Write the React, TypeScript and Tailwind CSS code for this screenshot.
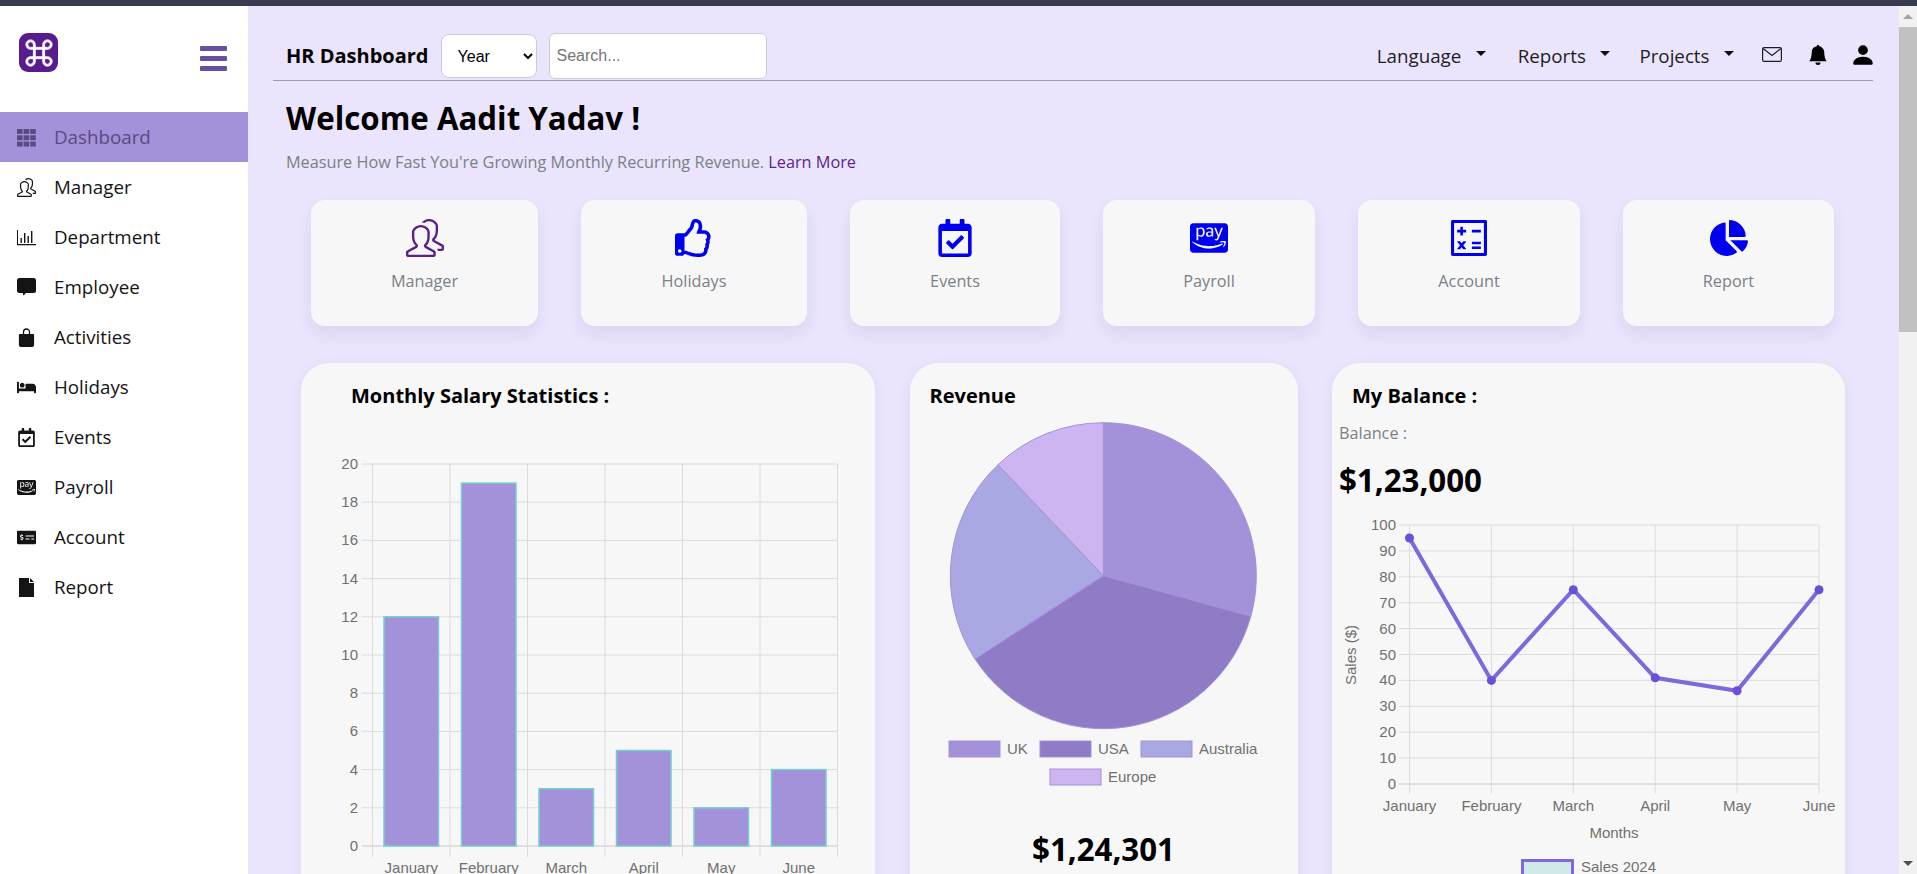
import React from 'react';
import { BsCommand, BsBellFill, BsPersonFill } from 'react-icons/bs';
import { SlPeople } from 'react-icons/sl';
import { FaBed, FaRegCalendarCheck, FaCcAmazonPay, FaMoneyCheckAlt, FaRegThumbsUp, FaChartPie } from 'react-icons/fa';
import { AiOutlineCalculator } from 'react-icons/ai';

type IconProps = { size?: number; className?: string };

const GridIcon = ({ size = 19 }: IconProps) => (
  <svg width={size} height={size} viewBox="0 0 19 19" fill="currentColor">
    {[1, 7.3, 13.6].map((y) => [0, 6.6, 13.2].map((x) => <rect key={`${x}-${y}`} x={x} y={y} width={5.6} height={4.9} />))}
  </svg>
);

const DeptIcon = ({ size = 19 }: IconProps) => (
  <svg width={size} height={size} viewBox="0 0 19 19" fill="currentColor">
    <path d="M0 2h1v14h18v1.3H0z" />
    <rect x={3.5} y={10} width={1.4} height={5} />
    <rect x={7} y={5} width={1.4} height={10} />
    <rect x={10.5} y={8} width={1.4} height={7} />
    <rect x={14} y={3} width={1.4} height={12} />
  </svg>
);

const ChatIcon = ({ size = 19 }: IconProps) => (
  <svg width={size} height={size} viewBox="0 0 19 19" fill="currentColor">
    <path d="M2.5 0h14A2.5 2.5 0 0 1 19 2.5v10a2.5 2.5 0 0 1-2.5 2.5H9l-2.5 2.6L5.6 15H2.500A2.500 2.500 0 0 1 0 12.500v-10A2.500 2.500 0 0 1 2.500 0z" />
  </svg>
);

const BagIcon = ({ size = 19 }: IconProps) => (
  <svg width={size} height={size} viewBox="0 0 19 19" fill="currentColor">
    <path d="M2.500 6h14a.6.6 0 0 1 .6.6V17a2 2 0 0 1-2 2H3.900a2 2 0 0 1-2-2V6.600a.6.6 0 0 1 .6-.6z" />
    <path d="M6.500 6V4a3 3 0 0 1 6 0v2" fill="none" stroke="currentColor" strokeWidth={1.3} />
  </svg>
);

const FileIcon = ({ size = 19 }: IconProps) => (
  <svg width={size} height={size} viewBox="0 0 19 19" fill="currentColor">
    <path d="M2 0h10v5h5v14H2zM13 0l4 4h-4z" />
  </svg>
);

const MailIcon = () => (
  <svg width={20} height={15} viewBox="0 0 20 15" fill="none" stroke="currentColor" strokeWidth={1.2} className="mb-[4px] ml-[28px]">
    <rect x={0.6} y={0.6} width={18.8} height={13.8} rx={1.5} />
    <path d="M1 1.500l9 7 9-7" />
  </svg>
);

const navItems = [
  { label: 'Dashboard', icon: GridIcon },
  { label: 'Manager', icon: SlPeople },
  { label: 'Department', icon: DeptIcon },
  { label: 'Employee', icon: ChatIcon },
  { label: 'Activities', icon: BagIcon },
  { label: 'Holidays', icon: FaBed },
  { label: 'Events', icon: FaRegCalendarCheck },
  { label: 'Payroll', icon: FaCcAmazonPay },
  { label: 'Account', icon: FaMoneyCheckAlt },
  { label: 'Report', icon: FileIcon },
];

const quickCards = [
  { label: 'Manager', icon: SlPeople, size: 38, width: 'w-[227px]', color: 'text-[#5a1e8e]' },
  { label: 'Holidays', icon: FaRegThumbsUp, size: 38, width: 'w-[226px]', color: 'text-[#0000f0]' },
  { label: 'Events', icon: FaRegCalendarCheck, size: 38, width: 'w-[210px]', color: 'text-[#0000f0]' },
  { label: 'Payroll', icon: FaCcAmazonPay, size: 38, width: 'w-[212px]', color: 'text-[#0000f0]' },
  { label: 'Account', icon: AiOutlineCalculator, size: 46, width: 'w-[222px]', color: 'text-[#0000f0]' },
  { label: 'Report', icon: FaChartPie, size: 38, width: 'w-[211px]', color: 'text-[#0000f0]' },
];

const months = ['January', 'February', 'March', 'April', 'May', 'June'];
const GRID = '#dcdcdc';
const AXIS = '#c8c8c8';
const LABEL = '#707070';

const Caret = () => (
  <span className="mb-[5px] ml-[14.5px] inline-block h-0 w-0 border-x-[5px] border-t-[5px] border-x-transparent border-t-[#111]" />
);

const BarChart = () => {
  const values = [12, 19, 3, 5, 2, 4];
  const left = 372.5;
  const step = 77.5;
  const bottom = 845;
  const unit = 19.1;
  return (
    <svg viewBox="301 440 574 440" className="mt-[32px] block h-[440px] w-[574px] font-['Liberation_Sans']">
      {Array.from({ length: 11 }).map((_, i) => {
        const y = bottom - i * 2 * unit;
        return (
          <g key={i}>
            <line x1={362} x2={837.5} y1={y} y2={y} stroke={i === 0 ? AXIS : GRID} strokeWidth={1} />
            <text x={358} y={y + 5} textAnchor="end" fontSize={15} fill={LABEL}>{i * 2}</text>
          </g>
        );
      })}
      {Array.from({ length: 7 }).map((_, i) => (
        <line key={i} x1={left + i * step} x2={left + i * step} y1={463} y2={856} stroke={GRID} strokeWidth={1} />
      ))}
      {values.map((v, i) => (
        <rect key={i} x={left + i * step + 11.5} y={bottom - v * unit} width={54.5} height={v * unit} fill="#a391d9" stroke="#74cfd0" strokeWidth={1.5} />
      ))}
      {months.map((m, i) => (
        <text key={m} x={left + (i + 0.5) * step} y={872} textAnchor="middle" fontSize={15} fill={LABEL}>{m}</text>
      ))}
    </svg>
  );
};

const slicePath = (cx: number, cy: number, r: number, from: number, to: number) => {
  const rad = (deg: number) => (deg * Math.PI) / 180;
  const x1 = cx + r * Math.sin(rad(from));
  const y1 = cy - r * Math.cos(rad(from));
  const x2 = cx + r * Math.sin(rad(to));
  const y2 = cy - r * Math.cos(rad(to));
  return `M${cx} ${cy}L${x1} ${y1}A${r} ${r} 0 ${to - from > 180 ? 1 : 0} 1 ${x2} ${y2}Z`;
};

const PieChart = () => {
  const slices = [
    { label: 'UK', from: 0, to: 105.4, color: '#a391d9', box: 949, y: 740 },
    { label: 'USA', from: 105.4, to: 237, color: '#8f7bc6', box: 1040, y: 740 },
    { label: 'Australia', from: 237, to: 316.5, color: '#a9a8e2', box: 1141, y: 740 },
    { label: 'Europe', from: 316.5, to: 360, color: '#ccb5f0', box: 1050, y: 768 },
  ];
  return (
    <svg viewBox="910 415 388 380" className="block h-[380px] w-[388px] font-['Liberation_Sans']">
      {slices.map((s) => (
        <path key={s.label} d={slicePath(1103.3, 574.7, 153, s.from, s.to)} fill={s.color} stroke="#a391d9" strokeWidth={1} />
      ))}
      {slices.map((s) => (
        <g key={s.label}>
          <rect x={s.box} y={s.y} width={51} height={16} fill={s.color} stroke="#a391d9" strokeWidth={1} />
          <text x={s.box + 58} y={s.y + 13} fontSize={15} fill={LABEL}>{s.label}</text>
        </g>
      ))}
    </svg>
  );
};

const LineChart = () => {
  const values = [95, 40, 75, 41, 36, 75];
  const left = 1409.5;
  const step = 81.9;
  const bottom = 783;
  const unit = 2.59;
  const points = values.map((v, i) => [left + i * step, bottom - v * unit]);
  return (
    <svg viewBox="1332 510 513 370" className="mt-[12.5px] block h-[370px] w-[513px] font-['Liberation_Sans']">
      {Array.from({ length: 11 }).map((_, i) => {
        const y = bottom - i * 25.9;
        return (
          <g key={i}>
            <line x1={1399} x2={1819} y1={y} y2={y} stroke={i === 0 ? AXIS : GRID} strokeWidth={1} />
            <text x={1396} y={y + 5} textAnchor="end" fontSize={15} fill={LABEL}>{i * 10}</text>
          </g>
        );
      })}
      {months.map((m, i) => (
        <g key={m}>
          <line x1={left + i * step} x2={left + i * step} y1={524} y2={793} stroke={GRID} strokeWidth={1} />
          <text x={left + i * step} y={810} textAnchor="middle" fontSize={15} fill={LABEL}>{m}</text>
        </g>
      ))}
      <polyline points={points.map((p) => p.join(',')).join(' ')} fill="none" stroke="#7f67dc" strokeWidth={4} />
      {points.map((p, i) => (
        <circle key={i} cx={p[0]} cy={p[1]} r={4.5} fill="#6c4fd8" />
      ))}
      <text x={1614} y={837} textAnchor="middle" fontSize={15} fill={LABEL}>Months</text>
      <text transform="translate(1356 654) rotate(-90)" textAnchor="middle" fontSize={15} fill={LABEL}>Sales ($)</text>
      <rect x={1522.5} y={859.5} width={50} height={16} fill="#d0e9e9" stroke="#7f67dc" strokeWidth={3} />
      <text x={1581} y={871} fontSize={15} fill={LABEL}>Sales 2024</text>
    </svg>
  );
};

export default function App() {
  return (
    <div className="flex h-[874px] w-full flex-col overflow-hidden font-['Open_Sans',sans-serif]">
      <div className="h-[6px] shrink-0 bg-[#393a4f]" />
      <div className="flex min-h-0 flex-1">
        {/* Sidebar */}
        <aside className="w-[248px] shrink-0 bg-white">
          <div className="flex h-[106px] items-start justify-between pl-[19px] pr-[21px]">
            <div className="mt-[27px] flex h-[39px] w-[39px] items-center justify-center rounded-[9px] bg-[#581c8e] text-white">
              <BsCommand size={30} strokeWidth={0.5} />
            </div>
            <div className="mt-[40px] flex h-[25px] w-[27px] flex-col justify-between">
              <span className="h-[5px] rounded-[1px] bg-[#6750a4]" />
              <span className="h-[5px] rounded-[1px] bg-[#6750a4]" />
              <span className="h-[5px] rounded-[1px] bg-[#6750a4]" />
            </div>
          </div>
          <nav>
            {navItems.map((item, i) => {
              const Icon = item.icon;
              return (
                <div
                  key={item.label}
                  className={
                    i === 0
                      ? 'flex h-[50px] items-center bg-[#a391d9] pl-[17px] text-[18.75px] text-[#5a4a82]'
                      : 'flex h-[50px] items-center pl-[17px] text-[18.75px] text-[#141414]'
                  }
                >
                  <span className="flex w-[37px] justify-start">
                    <Icon size={19} />
                  </span>
                  {item.label}
                </div>
              );
            })}
          </nav>
        </aside>

        {/* Main */}
        <main className="min-w-0 flex-1 overflow-hidden bg-[#eae4fc]">
          <header className="ml-[25px] mr-[26px] flex h-[75px] items-center border-b border-[#a09ca6] pl-[13px] pt-[26px]">
            <span className="text-[20px] font-bold text-[#050505]">HR Dashboard</span>
            <select className="ml-[12px] h-[44px] w-[96px] rounded-lg border border-[#cfcbd6] bg-white pl-[12px] font-['Liberation_Sans'] text-[16px] text-black">
              <option>Year</option>
            </select>
            <input
              placeholder="Search..."
              className="ml-[12px] h-[46px] w-[218px] rounded-md border border-[#cfcbd6] bg-white pl-[7px] font-['Liberation_Sans'] text-[16px] placeholder:text-[#757575]"
            />
            <div className="-mr-[3px] ml-auto flex items-center text-[18.75px] text-[#1d1d26]">
              <span>Language</span>
              <Caret />
              <span className="ml-[32px]">Reports</span>
              <Caret />
              <span className="ml-[29px]">Projects</span>
              <Caret />
              <MailIcon />
              <BsBellFill size={20} className="mb-[3px] ml-[26px] text-black" />
              <BsPersonFill size={26} className="mb-[3px] ml-[22px] text-black" />
            </div>
          </header>

          <h1 className="ml-[38px] mt-[15px] text-[31.25px] font-bold leading-[44px] text-black">Welcome Aadit Yadav !</h1>
          <p className="ml-[38px] mt-[11px] text-[16.25px] leading-[22px] text-[#7a8088]">
            Measure How Fast You're Growing Monthly Recurring Revenue. <span className="text-[#5a1e8e]">Learn More</span>
          </p>

          <div className="ml-[63px] mt-[26.5px] flex gap-[43px]">
            {quickCards.map((card) => {
              const Icon = card.icon;
              return (
                <div key={card.label} className={`${card.width} flex h-[126px] flex-col items-center rounded-[14px] bg-[#f7f7f7] pt-[19px] shadow-[0_8px_16px_rgba(60,40,120,0.08)]`}>
                  <span className="flex h-[38px] items-center">
                    <Icon size={card.size} className={card.color} />
                  </span>
                  <span className="mt-[12px] text-[16.25px] text-[#7a8088]">{card.label}</span>
                </div>
              );
            })}
          </div>

          <div className="ml-[53px] mt-[37px] flex gap-[34.5px]">
            <section className="h-[600px] w-[574px] rounded-[28px] bg-[#f7f7f7] pt-[20px] shadow-[0_4px_16px_rgba(60,40,120,0.06)]">
              <h2 className="ml-[50px] text-[20px] font-bold leading-[26px] text-black">Monthly Salary Statistics :</h2>
              <BarChart />
            </section>
            <section className="h-[600px] w-[388px] rounded-[28px] bg-[#f7f7f7] pt-[20px] shadow-[0_4px_16px_rgba(60,40,120,0.06)]">
              <h2 className="ml-[20px] text-[20px] font-bold leading-[26px] text-black">Revenue</h2>
              <div className="mt-[7px]">
                <PieChart />
              </div>
              <p className="mt-[35px] text-center text-[31.25px] font-bold leading-[36px] text-black">$1,24,301</p>
            </section>
            <section className="h-[600px] w-[513px] rounded-[28px] bg-[#f7f7f7] pt-[20px] shadow-[0_4px_16px_rgba(60,40,120,0.06)]">
              <h2 className="ml-[20px] text-[20px] font-bold leading-[26px] text-black">My Balance :</h2>
              <p className="ml-[7px] mt-[12.5px] text-[16.25px] leading-[24px] text-[#7a8088]">Balance :</p>
              <p className="ml-[7px] mt-[17px] text-[31.25px] font-bold leading-[36px] text-black">$1,23,000</p>
              <LineChart />
            </section>
          </div>
        </main>

        {/* Window scrollbar */}
        <div className="flex w-[18px] shrink-0 flex-col bg-[#f1f1f1]">
          <div className="flex h-[21px] items-center justify-center">
            <span className="h-0 w-0 border-x-[5px] border-b-[5px] border-x-transparent border-b-[#a3a3a3]" />
          </div>
          <div className="h-[305px] bg-[#c1c1c1]" />
          <div className="mt-auto flex h-[21px] items-center justify-center">
            <span className="h-0 w-0 border-x-[5px] border-t-[5px] border-x-transparent border-t-[#505050]" />
          </div>
        </div>
      </div>
    </div>
  );
}
